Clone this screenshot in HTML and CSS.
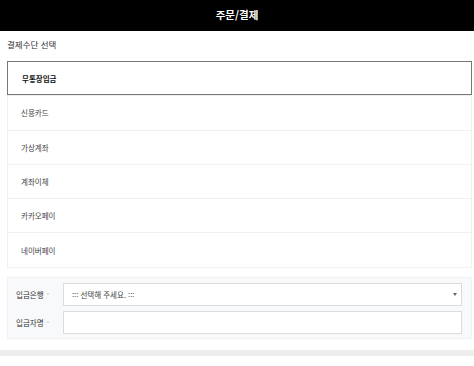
FILE: index.html
```html
<!DOCTYPE html>
<html lang="ko">
<head>
    <meta charset="UTF-8">
    <meta name="viewport" content="width=device-width, initial-scale=1.0">
    <title>주문/결제</title>
    <link rel="stylesheet" href="styles.css">
</head>
<body>

    <div class="header">
        <h1>주문/결제</h1>
    </div>

    <div class="section-title">결제수단 선택</div>

    <ul class="pay-list">
        <li class="pay-item selected">무통장입금</li>
        <li class="pay-item">신용카드</li>
        <li class="pay-item">가상계좌</li>
        <li class="pay-item">계좌이체</li>
        <li class="pay-item">카카오페이</li>
        <li class="pay-item">네이버페이</li>
    </ul>

    <div class="bank-box">
        <div class="form-row">
            <label>입금은행<span class="req">*</span></label>
            <div class="select">
                <span>::: 선택해 주세요. :::</span>
                <span class="arrow"></span>
            </div>
        </div>
        <div class="form-row">
            <label>입금자명<span class="req">*</span></label>
            <div class="text-input"></div>
        </div>
    </div>

    <div class="divider"></div>

</body>
</html>
```

FILE: styles.css
```css
body {
    margin: 0;
    font-family: "Noto Sans CJK KR", "Noto Sans", sans-serif;
    background-color: #fff;
    color: #333;
}
.header {
    height: 31px;
    background-color: #000;
    display: flex;
    align-items: center;
    justify-content: center;
}
.header h1 {
    margin: 0;
    color: #fff;
    font-size: 10.5px;
    font-weight: 700;
    line-height: 1;
}
.section-title {
    padding: 5px 7px 0;
    height: 25px;
    font-size: 8.5px;
    line-height: 16px;
    color: #333;
}
/* Payment methods */
.pay-list {
    list-style: none;
    margin: 0 2px 0 7px;
    padding: 0;
    border: 1px solid #f0f0f0;
    border-top: none;
}
.pay-item {
    height: 34.3px;
    box-sizing: border-box;
    display: flex;
    align-items: center;
    padding-left: 13px;
    font-size: 7.5px;
    color: #444;
    border-top: 1px solid #f0f0f0;
}
.pay-item.selected {
    margin: 0 -1px 0 -1px;
    border: 1px solid #777;
    font-weight: 700;
    color: #111;
    padding-left: 14px;
}
/* Bank form */
.bank-box {
    margin: 9px 2px 0 7px;
    padding: 5px 9px 4px 8px;
    background-color: #f8f9fb;
    border: 1px solid #f0f1f3;
    display: flex;
    flex-direction: column;
    gap: 5px;
}
.form-row {
    display: flex;
    align-items: center;
}
.form-row label {
    width: 47px;
    font-size: 7.5px;
    color: #333;
}
.req {
    color: #c8c8c8;
    font-size: 6px;
    margin-left: 3px;
}
.select,
.text-input {
    flex: 1;
    height: 23px;
    box-sizing: border-box;
    background-color: #fff;
    border: 1px solid #dcdcdc;
}
.select {
    display: flex;
    align-items: center;
    justify-content: space-between;
    padding: 0 4px 0 8px;
    font-size: 7.5px;
    color: #444;
}
.arrow {
    width: 0;
    height: 0;
    border-left: 2.5px solid transparent;
    border-right: 2.5px solid transparent;
    border-top: 3px solid #666;
}
.divider {
    margin-top: 11px;
    height: 6px;
    background-color: #eee;
}
```
